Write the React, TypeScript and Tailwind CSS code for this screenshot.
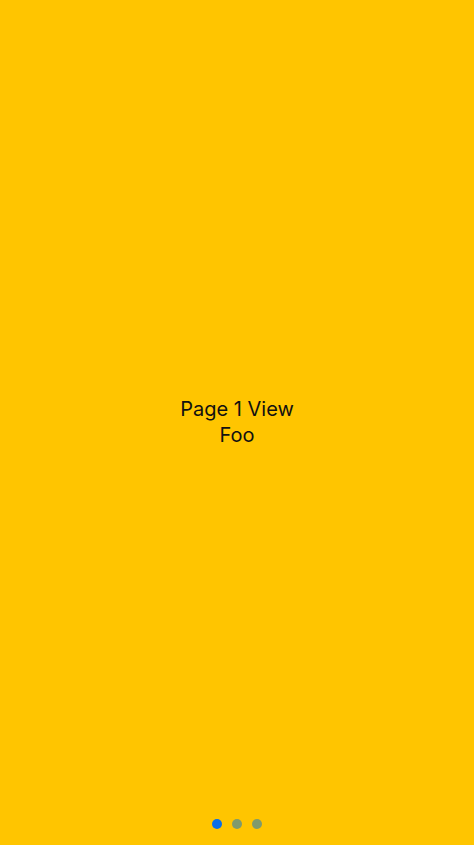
export default function App() {
  return (
    <div className="relative flex h-[845px] w-full flex-col items-center justify-center bg-[#ffc500]" style={{ fontFamily: '"Inter", "Liberation Sans", sans-serif' }}>
      <div className="mb-[2px] flex flex-col items-center text-[20px] leading-[26px] text-[#111]">
        <span>Page 1 View</span>
        <span>Foo</span>
      </div>
      <div className="absolute bottom-[16px] left-0 right-0 flex justify-center gap-[10px]">
        <span className="h-[10px] w-[10px] rounded-full bg-[#0a6ee8]" />
        <span className="h-[10px] w-[10px] rounded-full bg-[#7f9a6c]" />
        <span className="h-[10px] w-[10px] rounded-full bg-[#7f9a6c]" />
      </div>
    </div>
  );
}
